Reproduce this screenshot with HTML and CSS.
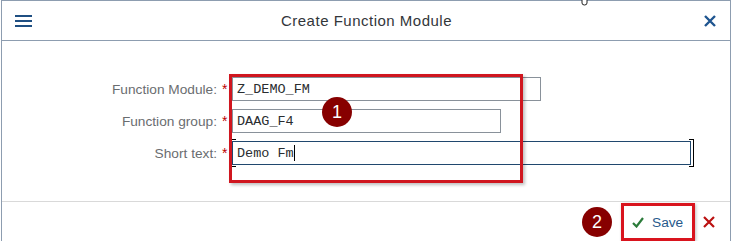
FILE: index.html
```html
<!DOCTYPE html>
<html lang="en">
<head>
    <meta charset="UTF-8">
    <meta name="viewport" content="width=device-width, initial-scale=1.0">
    <title>Create Function Module</title>
    <link rel="stylesheet" href="styles.css">
</head>
<body>
    <div class="dialog">
        <!-- Шапка -->
        <div class="header">
            <svg class="menu" width="17" height="12" viewBox="0 0 17 12">
                <rect x="0" y="0" width="17" height="2" fill="#1f4f82"/>
                <rect x="0" y="5" width="17" height="2" fill="#1f4f82"/>
                <rect x="0" y="10" width="17" height="2" fill="#1f4f82"/>
            </svg>
            <div class="title">Create Function Module</div>
            <svg class="close" width="12" height="12" viewBox="0 0 12 12">
                <path d="M1 1 L11 11 M11 1 L1 11" stroke="#1f5590" stroke-width="2.4" fill="none"/>
            </svg>
        </div>

        <!-- Поля -->
        <div class="content">
            <div class="form-row">
                <label>Function Module:</label>
                <span class="req">*</span>
                <input class="field w1" type="text" value="Z_DEMO_FM">
            </div>
            <div class="form-row">
                <label>Function group:</label>
                <span class="req">*</span>
                <input class="field w2" type="text" value="DAAG_F4">
            </div>
            <div class="form-row">
                <label>Short text:</label>
                <span class="req">*</span>
                <div class="focus-wrap">
                    <input class="field w3 active" type="text" value="Demo Fm">
                    <span class="caret"></span>
                </div>
            </div>
        </div>

        <!-- Кнопки -->
        <div class="footer">
            <button class="save" type="button">
                <svg width="12" height="11" viewBox="0 0 12 11">
                    <path d="M1 6 L4.5 9.5 L11 1" stroke="#2b7b3a" stroke-width="2.2" fill="none"/>
                </svg>
                <span>Save</span>
            </button>
            <button class="cancel" type="button">
                <svg width="12" height="12" viewBox="0 0 12 12">
                    <path d="M1 1 L11 11 M11 1 L1 11" stroke="#bb1111" stroke-width="2.2" fill="none"/>
                </svg>
            </button>
        </div>
    </div>

    <!-- Пометки поверх -->
    <div class="mark-box"></div>
    <div class="badge b1">1</div>
    <div class="badge b2">2</div>
    <svg class="pointer" width="8" height="6" viewBox="0 0 8 6">
        <path d="M1 0 L1 3 Q1 5 3.5 5 Q6 5 6 3 L6 0" stroke="#222" stroke-width="1" fill="#fff"/>
    </svg>
</body>
</html>
```

FILE: styles.css
```css
body {
    margin: 0;
    padding: 0;
    background: #fff;
    font-family: "Liberation Sans", Arial, sans-serif;
    color: #32363a;
    overflow: hidden;
}

.dialog {
    margin-left: 1px;
    width: 730px;
    height: 241px;
    box-sizing: border-box;
    border: 1px solid #8d9db0;
    border-bottom: none;
    background: #fff;
}

.header {
    height: 39px;
    border-bottom: 1px solid #8d9db0;
    display: flex;
    align-items: center;
    padding: 0 14px 0 13px;
}

.menu {
    display: block;
}

.title {
    flex: 1;
    text-align: center;
    font-size: 15px;
    letter-spacing: 0.5px;
    color: #32363a;
    margin-left: -3px;
}

.close {
    display: block;
}

.content {
    height: 124px;
    padding-top: 36px;
    border-bottom: 1px solid #d9d9d9;
}

.form-row {
    display: flex;
    align-items: center;
    height: 24px;
    margin-bottom: 8px;
}

.form-row label {
    width: 215px;
    text-align: right;
    font-size: 13.7px;
    color: #6a6d70;
}

.req {
    width: 10px;
    padding-left: 5px;
    color: #bb0000;
    font-size: 14px;
}

.field {
    height: 24px;
    box-sizing: border-box;
    border: 1px solid #89919a;
    padding: 1px 4px 0;
    font-family: "Liberation Mono", "DejaVu Sans Mono", monospace;
    font-size: 13.5px;
    line-height: 20px;
    color: #2a2d30;
    background: #fff;
    outline: none;
}

.w1 { width: 309px; }
.w2 { width: 269px; }
.w3 { width: 459px; }

.field.active {
    border-color: #20486e;
}

.focus-wrap {
    position: relative;
}

.focus-wrap::before,
.focus-wrap::after {
    content: "";
    position: absolute;
    top: -2px;
    width: 4px;
    height: 26px;
    border-top: 1px solid #000;
    border-bottom: 1px solid #000;
}

.focus-wrap::before {
    left: -1px;
    border-left: 1px solid #000;
}

.focus-wrap::after {
    right: -3px;
    border-right: 1px solid #000;
}

.caret {
    position: absolute;
    left: 62px;
    top: 4px;
    width: 1px;
    height: 16px;
    background: #000;
}

.footer {
    height: 39px;
    display: flex;
    justify-content: flex-end;
    align-items: flex-start;
    padding-right: 15px;
}

.save {
    margin-top: 1px;
    height: 38px;
    width: 74px;
    box-sizing: border-box;
    border: 3px solid #d9141e;
    background: #fff;
    box-shadow: 1px 1px 3px rgba(0, 0, 0, 0.25);
    display: flex;
    align-items: center;
    padding: 0 0 0 8px;
    gap: 8px;
    font-family: "Liberation Sans", Arial, sans-serif;
    font-size: 13.7px;
    color: #27598c;
    cursor: pointer;
}

.save svg {
    display: block;
}

.cancel {
    margin: 14px 0 0 8px;
    border: none;
    background: none;
    padding: 0;
    width: 12px;
    height: 12px;
    cursor: pointer;
}

.cancel svg {
    display: block;
}

.mark-box {
    position: absolute;
    left: 229px;
    top: 74px;
    width: 294px;
    height: 109px;
    box-sizing: border-box;
    border: 3px solid #d0161f;
    box-shadow: 2px 2px 3px rgba(0, 0, 0, 0.25);
}

.badge {
    position: absolute;
    width: 30px;
    height: 30px;
    border-radius: 50%;
    background: #870000;
    color: #fff;
    font-family: "Liberation Sans", Arial, sans-serif;
    font-size: 18px;
    line-height: 30px;
    text-align: center;
}

.b1 {
    left: 322px;
    top: 97px;
}

.b2 {
    left: 582px;
    top: 207px;
}

.pointer {
    position: absolute;
    left: 581px;
    top: 0;
}
```
